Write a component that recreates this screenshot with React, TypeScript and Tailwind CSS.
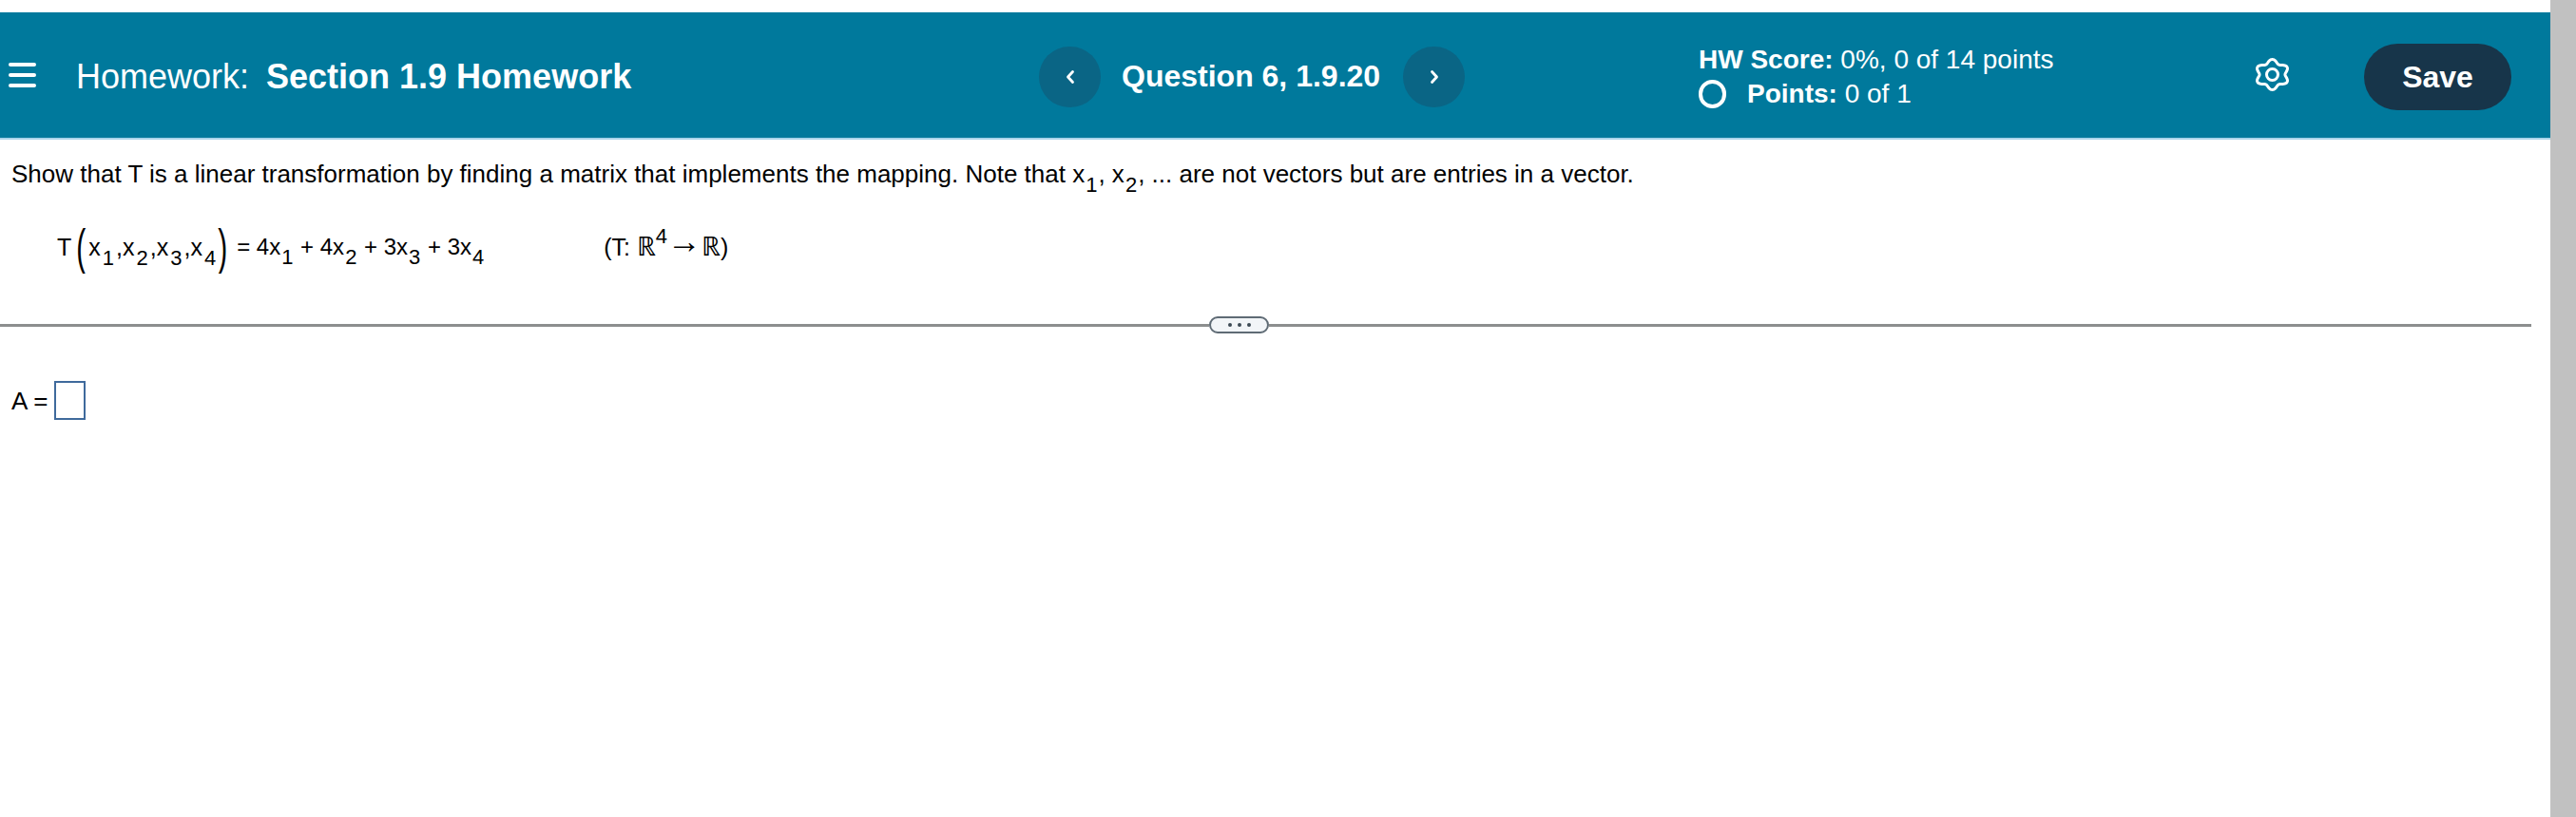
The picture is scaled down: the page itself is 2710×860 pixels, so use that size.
import React from "react";

const Sub = ({ children, tight }: { children: React.ReactNode; tight?: boolean }) => (
  <span className={tight ? "relative top-[10px] mx-[1px] text-[22px] leading-none" : "relative top-[10px] mx-[2px] text-[22px] leading-none"}>
    {children}
  </span>
);

const gearPath = (() => {
  const pts: string[] = [];
  for (let i = 0; i < 120; i++) {
    const t = (i / 120) * Math.PI * 2;
    const r = 14 + 2 * Math.cos(6 * (t + Math.PI / 2));
    pts.push(`${(18.5 + 1.12 * r * Math.cos(t)).toFixed(2)} ${(18.5 + r * Math.sin(t)).toFixed(2)}`);
  }
  return "M" + pts.join("L") + "Z";
})();

function Gear() {
  return (
    <svg width="37" height="37" viewBox="0 0 37 37" fill="none" stroke="white" strokeWidth="3" strokeLinejoin="round">
      <path d={gearPath} />
      <circle cx="18.5" cy="18.5" r="6" />
    </svg>
  );
}

function Chevron({ dir }: { dir: "l" | "r" }) {
  return (
    <svg width="10" height="16" viewBox="0 0 10 16" fill="none" stroke="white" strokeWidth="2.8" strokeLinecap="round" strokeLinejoin="round">
      <path d={dir === "l" ? "M7.5 2.5 2.5 8l5 5.5" : "M2.5 2.5 7.5 8l-5 5.5"} />
    </svg>
  );
}

export default function App() {
  return (
    <div className="flex h-[860px] w-[2710px] overflow-hidden bg-white font-['Liberation_Sans',Arial,sans-serif] text-black">
      <div className="flex w-[2683px] shrink-0 flex-col pt-[13px]">
        <header className="flex h-[134px] shrink-0 items-center border-b-[2px] border-[#a9d4ea] bg-[#00799c] pr-[41px] text-white">
          <div className="ml-[9px] flex w-[29px] flex-col gap-[7px]">
            <span className="h-[4px] rounded-full bg-white" />
            <span className="h-[4px] rounded-full bg-white" />
            <span className="h-[4px] rounded-full bg-white" />
          </div>
          <div className="ml-[42px] mt-[3px] w-[1013px] text-[36px] leading-none">
            Homework:<span className="ml-[18px] font-bold">Section 1.9 Homework</span>
          </div>
          <button className="mt-[3px] flex h-[64px] w-[65px] items-center justify-center rounded-full bg-[#0a6585]">
            <Chevron dir="l" />
          </button>
          <div className="ml-[22px] mt-[2px] w-[296px] text-[32px] font-bold">Question 6, 1.9.20</div>
          <button className="mt-[3px] flex h-[64px] w-[65px] items-center justify-center rounded-full bg-[#0a6585]">
            <Chevron dir="r" />
          </button>
          <div className="ml-[246px] mt-[4px] w-[585px] text-[28px] leading-[36px]">
            <div>
              <span className="font-bold">HW Score:</span> 0%, 0 of 14 points
            </div>
            <div className="flex items-center">
              <span className="mr-[22px] h-[30px] w-[29px] rounded-full border-[4px] border-white" />
              <span>
                <span className="font-bold">Points:</span> 0 of 1
              </span>
            </div>
          </div>
          <div className="mt-[-2px]">
            <Gear />
          </div>
          <button className="ml-auto mt-[3px] h-[70px] w-[155px] rounded-full bg-[#17354a] text-[32px] font-bold">Save</button>
        </header>

        <p className="mt-[18px] ml-[12px] text-[26px] leading-[36px]">
          Show that T is a linear transformation by finding a matrix that implements the mapping. Note that x<Sub tight>1</Sub>, x<Sub tight>2</Sub>, ... are not vectors but are entries in a vector.
        </p>

        <div className="mt-[35px] flex h-[48px] items-center text-[25px] leading-none">
          <span className="ml-[60px]">T</span>
          <span className="ml-[5px] inline-block scale-y-[1.75] text-[30px] leading-none">(</span>
          <span className="ml-[3px]">
            x<Sub>1</Sub>,x<Sub>2</Sub>,x<Sub>3</Sub>,x<Sub>4</Sub>
          </span>
          <span className="inline-block scale-y-[1.75] text-[30px] leading-none">)</span>
          <span className="ml-[10px] w-[386px] text-[24px]">
            = 4x<Sub tight>1</Sub> + 4x<Sub tight>2</Sub> + 3x<Sub tight>3</Sub> + 3x<Sub tight>4</Sub>
          </span>
          <span className="flex items-center">
            (T:&nbsp;<span className="text-[28px]">ℝ</span>
            <span className="relative top-[-11px] text-[22px]">4</span>
            <span className="relative top-[-6px] text-[36px] leading-none">→</span>
            <span className="text-[28px]">ℝ</span>)
          </span>
        </div>

        <div className="mt-[49px] flex h-[18px] w-[2663px] items-center">
          <div className="h-[3px] w-[1272px] bg-[#8c8e8e]" />
          <div className="flex h-[18px] w-[63px] items-center justify-center gap-[6px] rounded-full border-[2px] border-[#5f6b75] bg-[#f2f5f8]">
            <span className="h-[4px] w-[4px] rounded-full bg-[#3d4a55]" />
            <span className="h-[4px] w-[4px] rounded-full bg-[#3d4a55]" />
            <span className="h-[4px] w-[4px] rounded-full bg-[#3d4a55]" />
          </div>
          <div className="h-[3px] flex-1 bg-[#8c8e8e]" />
        </div>

        <div className="mt-[50px] ml-[12px] flex items-center text-[26px] leading-none">
          <span>A =</span>
          <span className="ml-[7px] h-[41px] w-[33px] border-[2px] border-[#3f6a9c]" />
        </div>
      </div>
      <div className="flex-1 bg-[#c1c1c1]" />
    </div>
  );
}
